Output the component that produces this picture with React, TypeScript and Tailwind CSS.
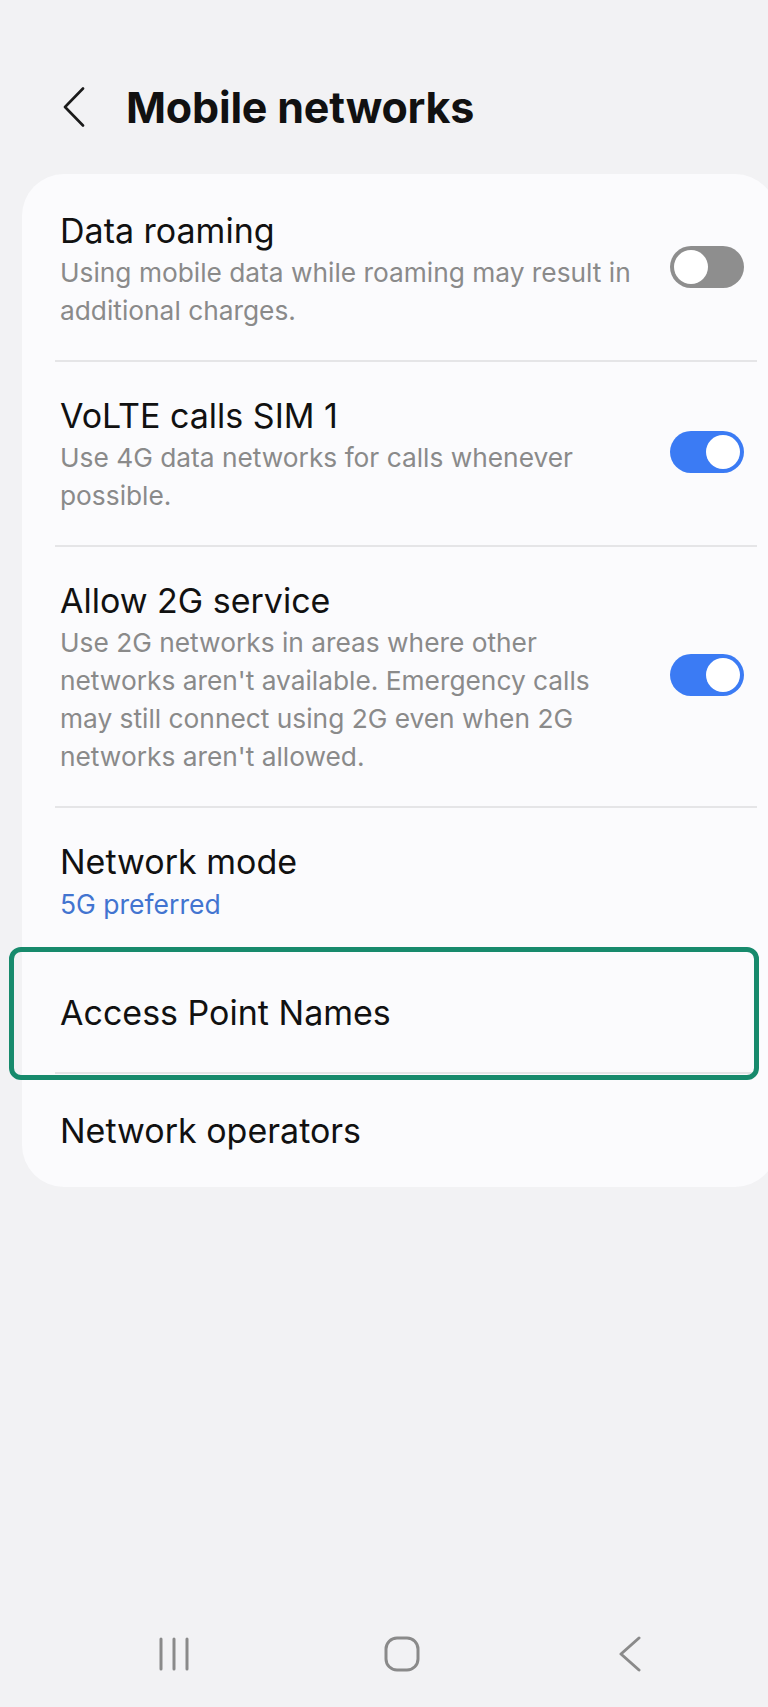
import React from 'react';

type RowProps = {
  title: string;
  lines?: string[];
  toggle?: 'on' | 'off';
  blue?: boolean;
  top?: string;
};

function Toggle({ on }: { on: boolean }) {
  return (
    <div
      className={
        on
          ? 'w-[74px] h-[42px] rounded-full bg-[#3b7bf4] p-[4px] flex justify-end shrink-0 mb-2 ml-4'
          : 'w-[74px] h-[42px] rounded-full bg-[#8e8e8e] p-[4px] flex justify-start shrink-0 mb-2 ml-4'
      }
    >
      <div className="w-[34px] h-[34px] rounded-full bg-white" />
    </div>
  );
}

function Row({ title, lines = [], toggle, blue, top = 'pt-[34px]' }: RowProps) {
  return (
    <div className={`flex items-center pl-[38px] pr-[33px] pb-[30px] ${top}`}>
      <div className="flex-1">
        <div className="text-[34px] leading-[40px] text-[#111]">{title}</div>
        {lines.length > 0 && (
          <div className={blue ? 'mt-[3px] text-[26.5px] leading-[38px] text-[#4274d0]' : 'mt-[3px] text-[26.3px] leading-[38px] text-[#8a8a8a]'}>
            {lines.map((l) => (
              <div key={l} className="whitespace-nowrap">{l}</div>
            ))}
          </div>
        )}
      </div>
      {toggle && <Toggle on={toggle === 'on'} />}
    </div>
  );
}

const Divider = () => <div className="h-[2px] bg-[#e5e5e7] ml-[33px] mr-[20px]" />;

export default function App() {
  return (
    <div className="w-[768px] h-[1707px] overflow-hidden bg-[#f2f2f4] flex flex-col font-['Inter',sans-serif]">
      <div className="pt-[80px] h-[134px] flex items-center pl-[63px] shrink-0">
        <div className="h-[54px] flex items-center">
          <svg width="22" height="40" viewBox="0 0 22 40" fill="none">
            <polyline points="20,1.5 2,20 20,38.5" stroke="#1a1a1a" strokeWidth="2.6" strokeLinecap="round" strokeLinejoin="round" />
          </svg>
          <h1 className="ml-[41px] text-[43px] font-bold text-[#111] leading-[54px] tracking-[-0.2px]">Mobile networks</h1>
        </div>
      </div>

      <div className="mt-[40px] ml-[22px] w-[755px] shrink-0 rounded-[42px] bg-[#fbfbfd]">
        <Row
          top="pt-[37px]"
          title="Data roaming"
          lines={['Using mobile data while roaming may result in', 'additional charges.']}
          toggle="off"
        />
        <Divider />
        <Row
          title="VoLTE calls SIM 1"
          lines={['Use 4G data networks for calls whenever', 'possible.']}
          toggle="on"
        />
        <Divider />
        <Row
          title="Allow 2G service"
          lines={[
            'Use 2G networks in areas where other',
            "networks aren't available. Emergency calls",
            'may still connect using 2G even when 2G',
            "networks aren't allowed.",
          ]}
          toggle="on"
        />
        <Divider />
        <Row title="Network mode" lines={['5G preferred']} blue />

        <div className="relative">
          <div className="h-[119px] flex items-center pl-[38px]">
            <div className="text-[34px] leading-[40px] text-[#111]">Access Point Names</div>
          </div>
          <Divider />
          <div className="absolute -left-[13px] -top-[6px] w-[750px] h-[133px] rounded-[12px] border-[5px] border-[#178a6c]" />
        </div>

        <div className="h-[113px] flex items-center pl-[38px]">
          <div className="text-[34px] leading-[40px] text-[#111]">Network operators</div>
        </div>
      </div>

      <div className="flex-1" />

      <div className="h-[106px] shrink-0 flex items-center pl-[60px]">
        <div className="w-[228px] flex justify-center">
          <svg width="32" height="34" viewBox="0 0 32 34" fill="none">
            <path d="M3 2v30M16 2v30M29 2v30" stroke="#8a8a8a" strokeWidth="3" strokeLinecap="round" />
          </svg>
        </div>
        <div className="w-[228px] flex justify-center">
          <svg width="36" height="36" viewBox="0 0 36 36" fill="none">
            <rect x="2" y="2" width="32" height="32" rx="11" stroke="#8a8a8a" strokeWidth="3" />
          </svg>
        </div>
        <div className="w-[228px] flex justify-center">
          <svg width="24" height="36" viewBox="0 0 24 36" fill="none">
            <polyline points="21,2 3,18 21,34" stroke="#8a8a8a" strokeWidth="3" strokeLinecap="round" strokeLinejoin="round" />
          </svg>
        </div>
      </div>
    </div>
  );
}
